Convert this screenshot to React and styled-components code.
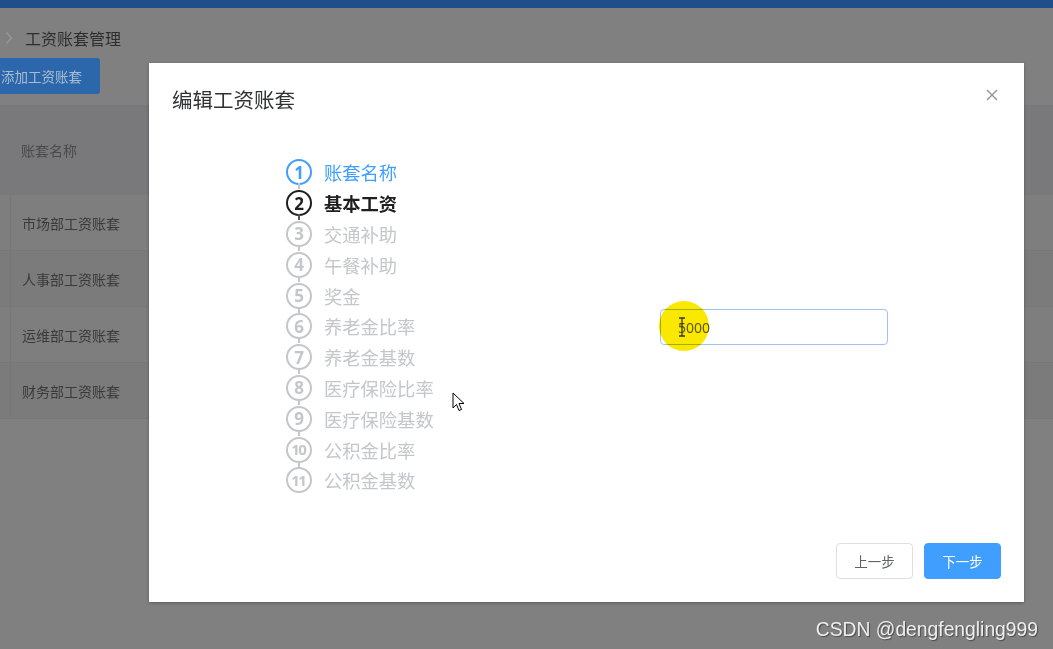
import React from "react";
import styled, { createGlobalStyle } from "styled-components";

const Global = createGlobalStyle`
  html, body { margin: 0; padding: 0; }
  body {
    width: 1053px; height: 649px; overflow: hidden;
    background: #808080;
    font-family: "Noto Sans CJK SC", "Noto Sans", sans-serif;
  }
  * { box-sizing: border-box; }
`;

const Page = styled.div`
  position: relative;
  width: 1053px;
  height: 649px;
  background: #808080;
  overflow: hidden;
`;

const TopBar = styled.div`
  height: 8px;
  background: #1f4e89;
`;

const Breadcrumb = styled.div`
  display: flex;
  align-items: center;
  height: 44px;
  padding: 15px 0 0 5px;
  gap: 12px;
  color: #2e2e2e;
  font-size: 16px;
`;

const Chevron = styled.svg`
  display: block;
`;

const AddButton = styled.div`
  margin: 6px 0 0 -10px;
  width: 110px;
  height: 36px;
  border-radius: 3px;
  background: #2c67ab;
  color: #a9bcd2;
  font-size: 13.5px;
  display: flex;
  align-items: center;
  padding-left: 11px;
`;

const Table = styled.div`
  margin-top: 11px;
  display: flex;
  flex-direction: column;
`;

const HeaderRow = styled.div`
  height: 90px;
  background: #79797b;
  display: flex;
  align-items: center;
  padding-left: 21px;
  font-size: 14px;
  color: #4a4a4a;
`;

const Row = styled.div`
  height: 56px;
  display: flex;
  align-items: center;
  padding-left: 10px;
  background: ${(p) => (p.$dark ? "#7b7b7c" : "#7e7e7e")};
  border-bottom: 1px solid #777779;
`;

const RowCell = styled.div`
  height: 100%;
  display: flex;
  align-items: center;
  padding-left: 11px;
  border-left: 1px solid #777779;
  font-size: 14px;
  color: #3a3a3a;
`;

const Modal = styled.div`
  position: absolute;
  left: 149px;
  top: 63px;
  width: 875px;
  height: 539px;
  background: #ffffff;
  box-shadow: 0 1px 3px rgba(0, 0, 0, 0.3);
  display: flex;
  flex-direction: column;
`;

const ModalHeader = styled.div`
  padding: 24px 24px 10px 23px;
`;

const Title = styled.div`
  font-size: 20.5px;
  line-height: 24px;
  color: #303133;
`;

const Close = styled.div`
  position: absolute;
  top: 25px;
  right: 25px;
  width: 14px;
  height: 14px;
  display: flex;
`;

const Body = styled.div`
  display: flex;
  align-items: center;
  padding: 36px 0 0 137px;
`;

const Steps = styled.div`
  width: 200px;
  display: flex;
  flex-direction: column;
`;

const Step = styled.div`
  height: 30.8px;
  display: flex;
  align-items: center;
  gap: 12px;
`;

const colorOf = (s) =>
  s === "active" ? "#409eff" : s === "current" ? "#1f1f1f" : "#c4c6cb";

const Circle = styled.div`
  position: relative;
  width: 26px;
  height: 26px;
  border-radius: 50%;
  border: 2px solid ${(p) => colorOf(p.$state)};
  color: ${(p) => colorOf(p.$state)};
  display: flex;
  align-items: center;
  justify-content: center;
  font-family: "Noto Sans", sans-serif;
  font-weight: 700;
  font-size: ${(p) => (p.$wide ? "15px" : "17px")};
  letter-spacing: ${(p) => (p.$wide ? "-1.5px" : "0")};
  text-indent: ${(p) => (p.$wide ? "-1.5px" : "0")};
  line-height: 1;
  &::after {
    content: "";
    display: ${(p) => (p.$last ? "none" : "block")};
    position: absolute;
    left: 50%;
    top: 100%;
    width: 2px;
    height: 6px;
    margin-left: -1px;
    background: ${(p) => (p.$state === "current" ? "#555" : "#c4c6cb")};
  }
`;

const Label = styled.div`
  font-size: 18.3px;
  color: ${(p) => colorOf(p.$state)};
  font-weight: ${(p) => (p.$state === "current" ? 700 : 400)};
`;

const InputWrap = styled.div`
  position: relative;
  margin: 2px 0 0 174px;
  width: 228px;
  height: 36px;
  border: 1px solid #9fc2ee;
  border-radius: 4px;
  display: flex;
  align-items: center;
  padding-left: 17px;
  font-family: "Noto Sans", sans-serif;
  font-size: 14px;
  color: #606266;
`;

const Highlight = styled.div`
  position: absolute;
  left: -2px;
  top: -9px;
  width: 50px;
  height: 50px;
  border-radius: 50%;
  background: #fbe800;
  mix-blend-mode: multiply;
`;

const Beam = styled.svg`
  position: absolute;
  left: 17px;
  top: 7px;
`;

const Footer = styled.div`
  margin-top: auto;
  display: flex;
  justify-content: flex-end;
  gap: 11px;
  padding: 0 23px 23px 0;
`;

const Btn = styled.div`
  width: 77px;
  height: 36px;
  border-radius: 4px;
  display: flex;
  align-items: center;
  justify-content: center;
  font-size: 13.5px;
  background: ${(p) => (p.$primary ? "#409eff" : "#ffffff")};
  color: ${(p) => (p.$primary ? "#ffffff" : "#606266")};
  border: 1px solid ${(p) => (p.$primary ? "#409eff" : "#dcdfe6")};
`;

const Pointer = styled.svg`
  position: absolute;
  left: 452px;
  top: 392px;
`;

const Watermark = styled.div`
  position: absolute;
  right: 15px;
  bottom: 8px;
  font-family: "Liberation Sans", sans-serif;
  font-size: 19.3px;
  color: #efefef;
  text-shadow: 1px 1px 1px #4a4a4a;
`;

const steps = [
  "账套名称",
  "基本工资",
  "交通补助",
  "午餐补助",
  "奖金",
  "养老金比率",
  "养老金基数",
  "医疗保险比率",
  "医疗保险基数",
  "公积金比率",
  "公积金基数",
];

const rows = ["市场部工资账套", "人事部工资账套", "运维部工资账套", "财务部工资账套"];

export default function App() {
  return (
    <Page>
      <Global />
      <TopBar />
      <Breadcrumb>
        <Chevron width="8" height="14" viewBox="0 0 8 14">
          <path d="M1.5 1.5 L6.5 7 L1.5 12.5" stroke="#9a9a9a" strokeWidth="1.2" fill="none" />
        </Chevron>
        <span>工资账套管理</span>
      </Breadcrumb>
      <AddButton>添加工资账套</AddButton>
      <Table>
        <HeaderRow>账套名称</HeaderRow>
        {rows.map((r, i) => (
          <Row key={r} $dark={i % 2 === 1}>
            <RowCell>{r}</RowCell>
          </Row>
        ))}
      </Table>

      <Modal>
        <ModalHeader>
          <Title>编辑工资账套</Title>
        </ModalHeader>
        <Close>
          <svg width="14" height="14" viewBox="0 0 14 14">
            <path d="M2 2 L12 12 M12 2 L2 12" stroke="#909399" strokeWidth="1.4" />
          </svg>
        </Close>
        <Body>
          <Steps>
            {steps.map((s, i) => {
              const state = i === 0 ? "active" : i === 1 ? "current" : "wait";
              return (
                <Step key={s}>
                  <Circle $state={state} $wide={i >= 9} $last={i === steps.length - 1}>
                    {i + 1}
                  </Circle>
                  <Label $state={state}>{s}</Label>
                </Step>
              );
            })}
          </Steps>
          <InputWrap>
            5000
            <Highlight />
            <Beam width="8" height="20" viewBox="0 0 8 20">
              <path d="M1 1 H7 M4 1 V19 M1 19 H7" stroke="#333" strokeWidth="1.3" fill="none" />
            </Beam>
          </InputWrap>
        </Body>
        <Footer>
          <Btn>上一步</Btn>
          <Btn $primary>下一步</Btn>
        </Footer>
      </Modal>

      <Pointer width="14" height="22" viewBox="0 0 14 22">
        <path
          d="M1 1 L1 16 L4.5 12.5 L7 18.5 L9.5 17.5 L7 11.5 L12 11.5 Z"
          fill="#ffffff"
          stroke="#000000"
          strokeWidth="1"
          strokeLinejoin="round"
        />
      </Pointer>

      <Watermark>CSDN @dengfengling999</Watermark>
    </Page>
  );
}
